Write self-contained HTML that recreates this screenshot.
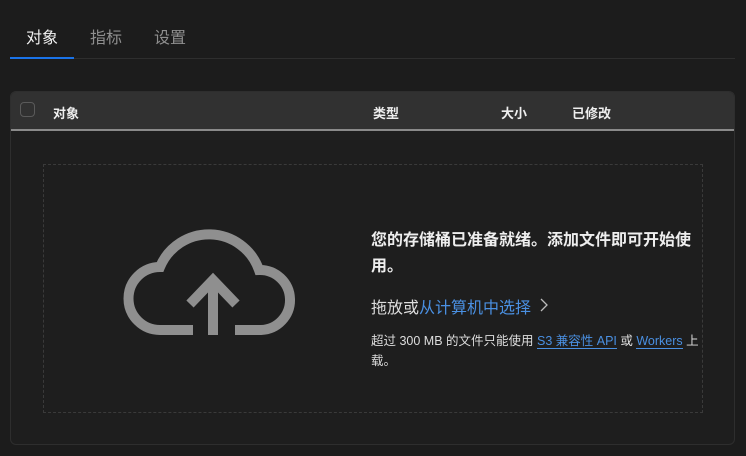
<!DOCTYPE html>
<html><head><meta charset="utf-8"><style>
*{margin:0;padding:0;box-sizing:border-box}
body{width:746px;height:456px;background:#1c1c1c;font-family:"Liberation Sans","Noto Sans CJK SC",sans-serif;color:#e6e6e6;position:relative;overflow:hidden}
.a{position:absolute}
.tab{top:24px;font-size:16px;color:#8f8f8f}
.panel{left:10px;top:91px;width:725px;height:354px;border:1px solid #2e2e2e;border-radius:6px;background:#1e1e1e}
.hdr{left:0;top:0;width:723px;height:39px;background:#313131;border-radius:5px 5px 0 0;border-bottom:2px solid #8a8a8a}
.h{top:11px;font-size:13px;font-weight:bold;color:#eee}
.dash{left:32px;top:72px;width:660px;height:249px;border:1px dashed #3a3a3a}
a{color:#4a90e2;text-decoration:none;border-bottom:1px solid #4a90e2}
</style></head><body>
<div class="a tab" style="left:26px;color:#f0f0f0">对象</div>
<div class="a tab" style="left:90px">指标</div>
<div class="a tab" style="left:154px">设置</div>
<div class="a" style="left:10px;top:58px;width:725px;height:1px;background:#2e2e2e"></div>
<div class="a" style="left:10px;top:57px;width:64px;height:2px;background:#1a73e8"></div>
<div class="a panel">
 <div class="a hdr">
  <div class="a" style="left:9px;top:10px;width:15px;height:15px;border:1px solid #5a5a5a;border-radius:4px"></div>
  <div class="a h" style="left:42px">对象</div>
  <div class="a h" style="left:362px">类型</div>
  <div class="a h" style="left:490px">大小</div>
  <div class="a h" style="left:561px">已修改</div>
 </div>
 <div class="a dash"></div>
</div>
<svg class="a" style="left:0;top:0" width="746" height="456">
<path d="M193 330 H160 A31 31 0 0 1 160 267 A53 53 0 0 1 259 270 A30 30 0 0 1 261 330 H235" fill="none" stroke="#8f8f8f" stroke-width="10"/>
<path d="M213 335 V285 M190 304 L213 280 L236 304" fill="none" stroke="#8f8f8f" stroke-width="10"/>
<path d="M541 299 L547 305 L541 311" fill="none" stroke="#bbb" stroke-width="1.3"/>
</svg>
<div class="a" style="left:371px;top:228px;width:332px;font-size:16px;font-weight:bold;line-height:26px;color:#eee">您的存储桶已准备就绪。添加文件即可开始使用。</div>
<div class="a" style="left:371px;top:294px;font-size:16px;color:#ddd">拖放或<span style="color:#4a90e2">从计算机中选择</span></div>
<div class="a" style="left:371px;top:331px;width:330px;font-size:12.5px;line-height:20px;color:#ddd">超过 300 MB 的文件只能使用 <a>S3 兼容性 API</a> 或 <a>Workers</a> 上载。</div>
</body></html>
